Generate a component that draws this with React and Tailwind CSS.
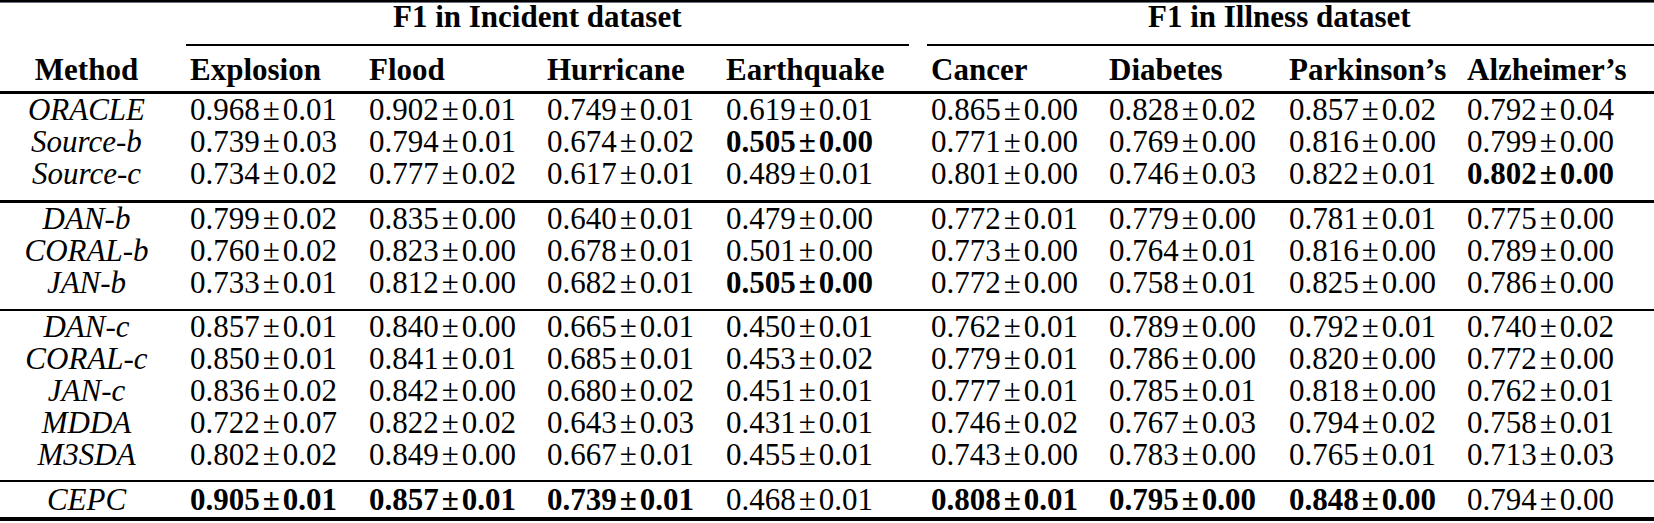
import React from 'react';

const cols = 'grid grid-cols-[190px_179px_178px_179px_205px_178px_180px_178px_187px]';

const sections = [
    {
        pad: 'pt-0 pb-[10px]',
        rows: [
            ['ORACLE', ['0.968±0.01', '0.902±0.01', '0.749±0.01', '0.619±0.01', '0.865±0.00', '0.828±0.02', '0.857±0.02', '0.792±0.04'], []],
            ['Source-b', ['0.739±0.03', '0.794±0.01', '0.674±0.02', '0.505±0.00', '0.771±0.00', '0.769±0.00', '0.816±0.00', '0.799±0.00'], [3]],
            ['Source-c', ['0.734±0.02', '0.777±0.02', '0.617±0.01', '0.489±0.01', '0.801±0.00', '0.746±0.03', '0.822±0.01', '0.802±0.00'], [7]],
        ],
        rule: 'h-[3px]',
    },
    {
        pad: 'pt-0 pb-[10px]',
        rows: [
            ['DAN-b', ['0.799±0.02', '0.835±0.00', '0.640±0.01', '0.479±0.00', '0.772±0.01', '0.779±0.00', '0.781±0.01', '0.775±0.00'], []],
            ['CORAL-b', ['0.760±0.02', '0.823±0.00', '0.678±0.01', '0.501±0.00', '0.773±0.00', '0.764±0.01', '0.816±0.00', '0.789±0.00'], []],
            ['JAN-b', ['0.733±0.01', '0.812±0.00', '0.682±0.01', '0.505±0.00', '0.772±0.00', '0.758±0.01', '0.825±0.00', '0.786±0.00'], [3]],
        ],
        rule: 'h-[2px]',
    },
    {
        pad: 'pt-0 pb-[9px]',
        rows: [
            ['DAN-c', ['0.857±0.01', '0.840±0.00', '0.665±0.01', '0.450±0.01', '0.762±0.01', '0.789±0.00', '0.792±0.01', '0.740±0.02'], []],
            ['CORAL-c', ['0.850±0.01', '0.841±0.01', '0.685±0.01', '0.453±0.02', '0.779±0.01', '0.786±0.00', '0.820±0.00', '0.772±0.00'], []],
            ['JAN-c', ['0.836±0.02', '0.842±0.00', '0.680±0.02', '0.451±0.01', '0.777±0.01', '0.785±0.01', '0.818±0.00', '0.762±0.01'], []],
            ['MDDA', ['0.722±0.07', '0.822±0.02', '0.643±0.03', '0.431±0.01', '0.746±0.02', '0.767±0.03', '0.794±0.02', '0.758±0.01'], []],
            ['M3SDA', ['0.802±0.02', '0.849±0.00', '0.667±0.01', '0.455±0.01', '0.743±0.00', '0.783±0.00', '0.765±0.01', '0.713±0.03'], []],
        ],
        rule: 'h-[2px]',
    },
    {
        pad: 'pt-[2px] pb-[1px]',
        rows: [
            ['CEPC', ['0.905±0.01', '0.857±0.01', '0.739±0.01', '0.468±0.01', '0.808±0.01', '0.795±0.00', '0.848±0.00', '0.794±0.00'], [0, 1, 2, 4, 5, 6]],
        ],
        rule: 'h-[4px]',
    },
];

const Value = ({ text, bold }) => {
    const [a, b] = text.split('±');
    return (
        <div className={bold ? 'font-bold' : ''}>
            {a}
            <span className="px-[3px]">±</span>
            {b}
        </div>
    );
};

const headers = ['Explosion', 'Flood', 'Hurricane', 'Earthquake', 'Cancer', 'Diabetes', "Parkinson’s", "Alzheimer’s"];

export default function App() {
    return (
        <div className="w-[1654px] h-[523px] bg-white text-black font-['Liberation_Serif',serif] text-[31px] overflow-hidden">
            <div className="h-[3px] bg-black border-b border-gray-500"></div>

            {/* group titles */}
            <div className={`${cols} h-[41px] leading-[28px] font-bold`}>
                <div></div>
                <div className="col-span-4 pl-[203px]">F1 in Incident dataset</div>
                <div className="col-span-4 pl-[217px]">F1 in Illness dataset</div>
            </div>

            {/* cmidrules */}
            <div className="flex h-[2px]">
                <div className="w-[186px]"></div>
                <div className="w-[723px] bg-black"></div>
                <div className="w-[18px]"></div>
                <div className="flex-1 bg-black"></div>
            </div>

            {/* column headers */}
            <div className={`${cols} h-[45px] pt-[8px] leading-[32px] font-bold`}>
                <div className="text-center pr-[17px]">Method</div>
                {headers.map((h) => (
                    <div key={h}>{h}</div>
                ))}
            </div>
            <div className="h-[3px] bg-black"></div>

            {sections.map((s, si) => (
                <div key={si}>
                    <div className={s.pad}>
                        {s.rows.map(([name, vals, bold]) => (
                            <div key={name} className={`${cols} h-[32px] leading-[32px]`}>
                                <div className="text-center pr-[17px] italic">{name}</div>
                                {vals.map((v, i) => (
                                    <Value key={i} text={v} bold={bold.includes(i)} />
                                ))}
                            </div>
                        ))}
                    </div>
                    <div className={`${s.rule} bg-black`}></div>
                </div>
            ))}
        </div>
    );
}
